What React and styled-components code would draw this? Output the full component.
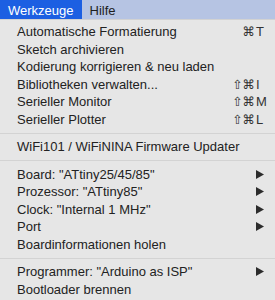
import React from "react";
import styled, { createGlobalStyle } from "styled-components";

const Global = createGlobalStyle`
  html, body { margin: 0; padding: 0; }
  body {
    width: 275px;
    height: 300px;
    overflow: hidden;
    background: #e6e6e6;
    font-family: "Liberation Sans", "DejaVu Sans", Arial, sans-serif;
    -webkit-font-smoothing: antialiased;
  }
`;

const Screen = styled.div`
  width: 275px;
  height: 300px;
  display: flex;
  flex-direction: column;
  overflow: hidden;
`;

const MenuBar = styled.div`
  height: 20px;
  display: flex;
  align-items: stretch;
  background: #b6c4e3;
  font-size: 13px;
  color: #1e1e1e;
`;

const BarItem = styled.div`
  display: flex;
  align-items: center;
  padding: 0 8px;
  background: ${(p) => (p.$active ? "#1c5fe2" : "transparent")};
  color: ${(p) => (p.$active ? "#ffffff" : "#1e1e1e")};
`;

const Menu = styled.div`
  flex: 1;
  display: flex;
  flex-direction: column;
  padding-top: 3px;
  background: #e6e6e6;
  border-top: 1px solid #d2d2d2;
  margin-top: -1px;
  font-size: 13px;
  color: #222222;
`;

const Row = styled.div`
  height: 17.5px;
  display: grid;
  grid-template-columns: 1fr auto 17px;
  align-items: center;
  padding: 0 2px 0 17px;
  white-space: nowrap;
`;

const Label = styled.span``;

const Mods = styled.span`
  text-align: right;
  margin-right: 1px;
  color: #333333;
  font-family: "DejaVu Sans", sans-serif;
  font-size: 12.5px;
`;

const Key = styled.span`
  display: flex;
  align-items: center;
  color: #333333;
`;

const Separator = styled.div`
  height: 10px;
  display: flex;
  align-items: center;
  &::after {
    content: "";
    flex: 1;
    height: 1px;
    background: #d3d3d3;
  }
`;

const Arrow = () => (
  <svg width="8" height="9" viewBox="0 0 8 9">
    <polygon points="0,0 8,4.5 0,9" fill="#2c2c2c" />
  </svg>
);

const items = [
  { label: "Automatische Formatierung", mods: "⌘", key: "T" },
  { label: "Sketch archivieren" },
  { label: "Kodierung korrigieren & neu laden" },
  { label: "Bibliotheken verwalten...", mods: "⇧⌘", key: "I" },
  { label: "Serieller Monitor", mods: "⇧⌘", key: "M" },
  { label: "Serieller Plotter", mods: "⇧⌘", key: "L" },
  { sep: true },
  { label: "WiFi101 / WiFiNINA Firmware Updater" },
  { sep: true },
  { label: 'Board: "ATtiny25/45/85"', sub: true },
  { label: 'Prozessor: "ATtiny85"', sub: true },
  { label: 'Clock: "Internal 1 MHz"', sub: true },
  { label: "Port", sub: true },
  { label: "Boardinformationen holen" },
  { sep: true },
  { label: 'Programmer: "Arduino as ISP"', sub: true },
  { label: "Bootloader brennen" },
];

export default function App() {
  return (
    <Screen>
      <Global />
      <MenuBar>
        <BarItem $active>Werkzeuge</BarItem>
        <BarItem>Hilfe</BarItem>
      </MenuBar>
      <Menu>
        {items.map((it, i) =>
          it.sep ? (
            <Separator key={i} />
          ) : (
            <Row key={i}>
              <Label>{it.label}</Label>
              <Mods>{it.mods || ""}</Mods>
              <Key>{it.sub ? <Arrow /> : it.key || ""}</Key>
            </Row>
          )
        )}
      </Menu>
    </Screen>
  );
}
